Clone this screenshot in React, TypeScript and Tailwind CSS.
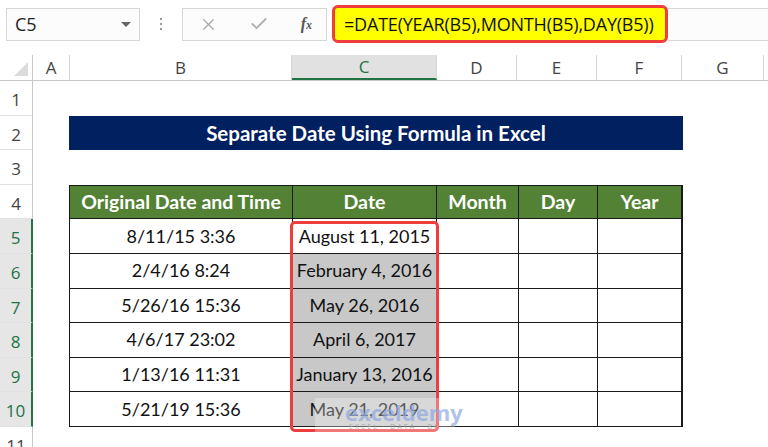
import { X, Check } from "lucide-react";

const rows = [
  ["8/11/15 3:36", "August 11, 2015"],
  ["2/4/16 8:24", "February 4, 2016"],
  ["5/26/16 15:36", "May 26, 2016"],
  ["4/6/17 23:02", "April 6, 2017"],
  ["1/13/16 11:31", "January 13, 2016"],
  ["5/21/19 15:36", "May 21, 2019"],
];

const cols = ["A", "B", "C", "D", "E", "F", "G"];
const colW = ["w-[37px]", "w-[222px]", "w-[145px]", "w-[80px]", "w-[80px]", "w-[85px]", "w-[82px]"];

const cellFont = { fontFamily: "Lato, 'Open Sans', sans-serif" };
const uiFont = { fontFamily: "'Open Sans', 'Noto Sans', sans-serif" };

function RowHead({ n, on }: { n: number; on?: boolean }) {
  return (
    <div
      className={
        "h-[34.6px] w-[33px] shrink-0 flex items-end justify-center pb-[2px] text-[17px] border-b border-[#e1e1e1] " +
        (on
          ? "bg-[#e6e6e6] text-[#217346] border-r-2 border-r-[#217346]"
          : "bg-white text-[#444] border-r border-r-[#c8c8c8]")
      }
      style={uiFont}
    >
      {n}
    </div>
  );
}

export default function App() {
  return (
    <div className="w-[768px] h-[447px] overflow-hidden bg-white relative">
      {/* formula bar */}
      <div className="flex items-center h-[47px] pt-[1px]">
        <div
          className="ml-[6px] w-[134px] h-[33px] border border-[#d6d6d6] bg-[#fcfcfc] flex items-center justify-between pl-[8px] pr-[8px] text-[18px] text-[#222]"
          style={uiFont}
        >
          <span>C5</span>
          <span className="w-0 h-0 border-l-[5px] border-r-[5px] border-t-[5px] border-l-transparent border-r-transparent border-t-[#666]" />
        </div>
        <div className="w-[42px] flex flex-col items-center gap-[3px]">
          <span className="w-[2px] h-[2px] bg-[#999]" />
          <span className="w-[2px] h-[2px] bg-[#999]" />
          <span className="w-[2px] h-[2px] bg-[#999]" />
        </div>
        <div className="w-[145px] h-[33px] border border-[#d6d6d6] bg-[#fcfcfc] flex items-center pl-[16px] pr-[14px] justify-between">
          <X size={19} strokeWidth={1.6} color="#a8a8a8" />
          <Check size={20} strokeWidth={2.2} color="#b0b0b0" />
          <span className="text-[16px] italic font-bold text-[#555]" style={{ fontFamily: "'Liberation Serif', serif" }}>
            f<span className="text-[12px]">x</span>
          </span>
        </div>
        <div
          className="ml-[5px] w-[336px] h-[38px] bg-[#ffff00] border-[3px] border-[#ee3d3d] rounded-[6px] flex items-center pl-[9px] text-[18px] text-[#111] tracking-[-0.2px]"
          style={uiFont}
        >
          =DATE(YEAR(B5),MONTH(B5),DAY(B5))
        </div>
        <div className="flex-1 h-[33px] border-y border-[#d6d6d6] bg-[#fcfcfc]" />
      </div>

      {/* column headers */}
      <div className="mt-[8px] flex h-[26px] border-b border-[#c8c8c8] text-[17px] text-[#444]" style={uiFont}>
        <div className="w-[33px] shrink-0 border-r border-[#c8c8c8] relative">
          <span className="absolute right-[4px] bottom-[4px] w-0 h-0 border-l-[14px] border-t-[14px] border-l-transparent border-t-transparent border-b-0 border-r-[14px] border-r-[#dcdcdc]" style={{ borderTopColor: "transparent" }} />
        </div>
        {cols.map((c, i) => (
          <div
            key={c}
            className={
              colW[i] +
              " shrink-0 flex items-center justify-center border-r border-[#d4d4d4] " +
              (c === "C" ? "bg-[#e1e1e1] text-[#217346] border-b-2 border-b-[#217346]" : "")
            }
          >
            {c}
          </div>
        ))}
        <div className="flex-1" />
      </div>

      {/* sheet body */}
      <div className="flex">
        <div className="flex flex-col">
          {[1, 2, 3, 4, 5, 6, 7, 8, 9, 10, 11].map((n) => (
            <RowHead key={n} n={n} on={n >= 5 && n <= 10} />
          ))}
        </div>

        <div className="relative flex-1" style={cellFont}>
          <div className="h-[34.6px]" />
          <div className="h-[34.6px] flex pl-[36px]">
            <div className="w-[614px] bg-[#002060] text-white font-bold text-[20.5px] flex items-center justify-center">
              Separate Date Using Formula in Excel
            </div>
          </div>
          <div className="h-[34.6px]" />
          <div className="h-[34.6px] flex pl-[36px] text-white font-bold text-[19.5px]">
            <div className="w-[224px] bg-[#548235] border border-[#1a1a1a] flex items-center justify-center">Original Date and Time</div>
            <div className="w-[144px] bg-[#548235] border-y border-r border-[#1a1a1a] flex items-center justify-center">Date</div>
            <div className="w-[82px] bg-[#548235] border-y border-r border-[#1a1a1a] flex items-center justify-center">Month</div>
            <div className="w-[79px] bg-[#548235] border-y border-r border-[#1a1a1a] flex items-center justify-center">Day</div>
            <div className="w-[85px] bg-[#548235] border-y border-r-2 border-[#1a1a1a] flex items-center justify-center">Year</div>
          </div>
          {rows.map(([a, b], i) => (
            <div key={a} className="h-[34.6px] flex pl-[36px] text-[18px] text-[#111]">
              <div className="w-[224px] border-x border-b border-[#1a1a1a] flex items-center justify-center">{a}</div>
              <div
                className={
                  "w-[144px] border-r border-b border-[#1a1a1a] flex items-center justify-center " +
                  (i === 0 ? "bg-white" : "bg-[#c8c8c8]")
                }
              >
                {b}
              </div>
              <div className="w-[82px] border-r border-b border-[#1a1a1a]" />
              <div className="w-[79px] border-r border-b border-[#1a1a1a]" />
              <div className="w-[85px] border-r-2 border-b border-[#1a1a1a]" />
            </div>
          ))}

          {/* red highlight box */}
          <div className="absolute left-[257px] top-[140px] w-[149px] h-[211px] border-[3px] border-[#ee3d3d] rounded-[5px] pointer-events-none" />

          {/* watermark */}
          <div className="absolute left-[282px] top-[317px] w-[140px] h-[34px] pointer-events-none flex items-center bg-white/30">
            <div className="flex flex-col leading-none ml-[30px]">
              <span className="text-[22px] font-bold text-[#8fa7e0]/70" style={uiFont}>
                exceldemy
              </span>
              <span className="text-[7px] tracking-[2px] text-[#9a9a9a]/80 ml-[4px]" style={uiFont}>
                EXCEL · DATA · BI
              </span>
            </div>
          </div>
        </div>
      </div>
    </div>
  );
}
